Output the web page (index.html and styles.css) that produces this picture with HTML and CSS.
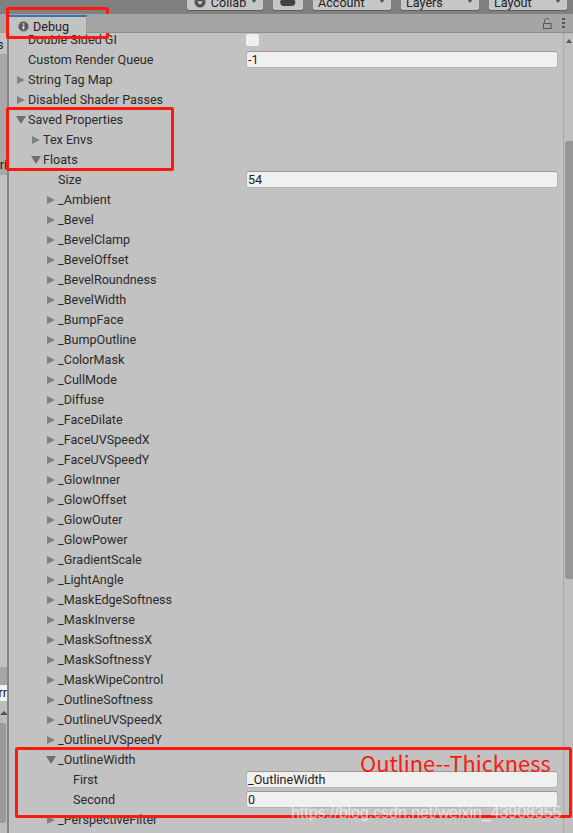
FILE: index.html
```html
<!DOCTYPE html>
<html lang="en">
<head>
<meta charset="utf-8">
<title>Debug Inspector</title>
<link rel="stylesheet" href="styles.css">
</head>
<body>
<header class="toolbar">
  <div class="tb-btn collab"><svg class="cloud-dot" viewBox="0 0 12 12"><circle cx="6" cy="6" r="5.5" fill="#555"/><path d="M3 5.5l3 3 3-3z" fill="#ddd"/></svg><span>Collab</span><i class="caret"></i></div>
  <div class="tb-btn cloud"><svg viewBox="0 0 16 10"><path d="M4 9.5a3.2 3.2 0 0 1-.5-6.3A4.3 4.3 0 0 1 11.500 3a3.300 3.300 0 0 1 .5 6.500z" fill="#444"/></svg></div>
  <div class="tb-btn account"><span>Account</span><i class="caret"></i></div>
  <div class="tb-btn layers"><span>Layers</span><i class="caret"></i></div>
  <div class="tb-btn layout"><span>Layout</span><i class="caret"></i></div>
</header>
<div class="workspace">
  <aside class="side">
    <div class="side-top"><span class="side-s">s</span></div>
    <div class="side-label"><span>ri</span></div>
    <div class="side-fill"></div>
    <div class="side-head"></div>
    <div class="side-field"><span>rr</span></div>
    <div class="side-scroll"><i class="side-up"></i><div class="side-thumb"></div></div>
  </aside>
  <main class="inspector">
    <div class="tabbar">
      <div class="tab">
        <svg class="info" viewBox="0 0 11 11"><circle cx="5.500" cy="5.500" r="5" fill="#5a5a5a"/><rect x="4.600" y="4.600" width="1.800" height="3.900" fill="#ddd"/><rect x="4.600" y="2.300" width="1.800" height="1.500" fill="#ddd"/></svg>
        <span>Debug</span>
      </div>
      <div class="tab-tools">
        <svg class="lock" viewBox="0 0 9 11"><path d="M1.500 4.500V2.500a2.300 2.300 0 0 1 4.500-.6" fill="none" stroke="#555" stroke-width="1"/><rect x=".5" y="5.500" width="7.500" height="5" fill="none" stroke="#555" stroke-width="1"/></svg>
        <div class="dots"><i></i><i></i><i></i></div>
      </div>
    </div>
    <div class="pane">
      <div class="rows">
        <div class="row l0"><span class="lbl">Double Sided GI</span><span class="check"></span></div>
        <div class="row l0"><span class="lbl">Custom Render Queue</span><span class="field">-1</span></div>
        <div class="row l0"><i class="tri r"></i><span class="lbl">String Tag Map</span></div>
        <div class="row l0"><i class="tri r"></i><span class="lbl">Disabled Shader Passes</span></div>
        <div class="row l0"><i class="tri d"></i><span class="lbl">Saved Properties</span></div>
        <div class="row l1"><i class="tri r"></i><span class="lbl">Tex Envs</span></div>
        <div class="row l1"><i class="tri d"></i><span class="lbl">Floats</span></div>
        <div class="row l2"><span class="lbl">Size</span><span class="field">54</span></div>
        <div class="row l2 fold"><i class="tri r"></i><span class="lbl">_Ambient</span></div>
        <div class="row l2 fold"><i class="tri r"></i><span class="lbl">_Bevel</span></div>
        <div class="row l2 fold"><i class="tri r"></i><span class="lbl">_BevelClamp</span></div>
        <div class="row l2 fold"><i class="tri r"></i><span class="lbl">_BevelOffset</span></div>
        <div class="row l2 fold"><i class="tri r"></i><span class="lbl">_BevelRoundness</span></div>
        <div class="row l2 fold"><i class="tri r"></i><span class="lbl">_BevelWidth</span></div>
        <div class="row l2 fold"><i class="tri r"></i><span class="lbl">_BumpFace</span></div>
        <div class="row l2 fold"><i class="tri r"></i><span class="lbl">_BumpOutline</span></div>
        <div class="row l2 fold"><i class="tri r"></i><span class="lbl">_ColorMask</span></div>
        <div class="row l2 fold"><i class="tri r"></i><span class="lbl">_CullMode</span></div>
        <div class="row l2 fold"><i class="tri r"></i><span class="lbl">_Diffuse</span></div>
        <div class="row l2 fold"><i class="tri r"></i><span class="lbl">_FaceDilate</span></div>
        <div class="row l2 fold"><i class="tri r"></i><span class="lbl">_FaceUVSpeedX</span></div>
        <div class="row l2 fold"><i class="tri r"></i><span class="lbl">_FaceUVSpeedY</span></div>
        <div class="row l2 fold"><i class="tri r"></i><span class="lbl">_GlowInner</span></div>
        <div class="row l2 fold"><i class="tri r"></i><span class="lbl">_GlowOffset</span></div>
        <div class="row l2 fold"><i class="tri r"></i><span class="lbl">_GlowOuter</span></div>
        <div class="row l2 fold"><i class="tri r"></i><span class="lbl">_GlowPower</span></div>
        <div class="row l2 fold"><i class="tri r"></i><span class="lbl">_GradientScale</span></div>
        <div class="row l2 fold"><i class="tri r"></i><span class="lbl">_LightAngle</span></div>
        <div class="row l2 fold"><i class="tri r"></i><span class="lbl">_MaskEdgeSoftness</span></div>
        <div class="row l2 fold"><i class="tri r"></i><span class="lbl">_MaskInverse</span></div>
        <div class="row l2 fold"><i class="tri r"></i><span class="lbl">_MaskSoftnessX</span></div>
        <div class="row l2 fold"><i class="tri r"></i><span class="lbl">_MaskSoftnessY</span></div>
        <div class="row l2 fold"><i class="tri r"></i><span class="lbl">_MaskWipeControl</span></div>
        <div class="row l2 fold"><i class="tri r"></i><span class="lbl">_OutlineSoftness</span></div>
        <div class="row l2 fold"><i class="tri r"></i><span class="lbl">_OutlineUVSpeedX</span></div>
        <div class="row l2 fold"><i class="tri r"></i><span class="lbl">_OutlineUVSpeedY</span></div>
        <div class="row l2 fold"><i class="tri d"></i><span class="lbl">_OutlineWidth</span></div>
        <div class="row l3"><span class="lbl">First</span><span class="field">_OutlineWidth</span></div>
        <div class="row l3"><span class="lbl">Second</span><span class="field">0</span></div>
        <div class="row l2 fold"><i class="tri r"></i><span class="lbl">_PerspectiveFilter</span></div>
      </div>
      <div class="vscroll"><i class="up"></i><div class="thumb"></div></div>
    </div>
  </main>
</div>
<div class="mark mark-tab"></div>
<div class="mark mark-saved"></div>
<div class="mark mark-outline"></div>
<div class="note">Outline--Thickness</div>
<div class="watermark">https://blog.csdn.net/weixin_43908355</div>
</body>
</html>
```
FILE: styles.css
```css
* { box-sizing: border-box; }
html, body { margin: 0; padding: 0; }
body {
  width: 573px;
  height: 833px;
  overflow: hidden;
  position: relative;
  background: #c2c2c2;
  color: #1c1c1c;
  font-family: "Roboto", "Inter", "Liberation Sans", sans-serif;
  font-size: 12.6px;
  display: flex;
  flex-direction: column;
}
.toolbar {
  height: 14px;
  flex: none;
  background: #808080;
  position: relative;
  overflow: hidden;
  display: flex;
  justify-content: flex-end;
  align-items: flex-end;
  padding: 0 6px 4px 0;
  gap: 10px;
}
.tb-btn {
  height: 16px;
  background: #c6c6c6;
  border-radius: 2px;
  box-shadow: 0 1px 0 #5e5e5e;
  display: flex;
  align-items: center;
  justify-content: space-between;
  padding: 0 6px 0 5px;
  color: #222;
  font-size: 12.6px;
  flex: none;
}
.collab { width: 76px; gap: 3px; padding-left: 7px; }
.cloud { width: 30px; padding: 0 6px; justify-content: center; }
.cloud svg { width: 18px; height: 12px; margin-top: -3px; }
.account, .layers, .layout { width: 78px; }
.cloud-dot { width: 12px; height: 12px; flex: none; }
.caret {
  width: 0; height: 0;
  border-left: 3px solid transparent;
  border-right: 3px solid transparent;
  border-top: 4px solid #555;
  margin-bottom: 3px;
}
.workspace { flex: 1; min-height: 0; display: flex; }
.side {
  width: 9px;
  flex: none;
  background: #a8a8a8;
  border-right: 2px solid #858585;
  display: flex;
  flex-direction: column;
  overflow: hidden;
}
.side-top {
  height: 41px;
  background: #c2c2c2;
  overflow: hidden;
  border-top: 19px solid #a5a5a5;
  border-bottom: 1px solid #a5a5a5;
}
.side-s { display: block; margin-left: -3px; line-height: 14px; padding-top: 5px; }
.side-label { height: 20px; margin-top: 100px; background: #a9a9a9; overflow: hidden; line-height: 20px; white-space: nowrap; direction: rtl; text-align: right; }
.side-fill { height: 492px; background: #c2c2c2; }
.side-head { height: 18px; background: #a5a5a5; }
.side-field { height: 16px; background: #f2f2f2; line-height: 16px; overflow: hidden; white-space: nowrap; direction: rtl; }
.side-scroll { flex: 1; position: relative; background: #bcbcbc; padding-top: 22px; }
.side-up { position: absolute; left: 0; top: 10px; border-left: 4px solid transparent; border-right: 4px solid transparent; border-bottom: 4px solid #555; }
.side-thumb { height: 100px; width: 6px; background: #9a9a9a; border-radius: 0 3px 3px 0; }
.inspector { flex: 1; min-width: 0; display: flex; flex-direction: column; position: relative; }
.tabbar {
  height: 19px;
  flex: none;
  background: #a5a5a5;
  border-bottom: 1px solid #8e8e8e;
  display: flex;
  justify-content: space-between;
  position: relative;
  z-index: 2;
}
.tab {
  width: 78px;
  height: 20px;
  margin-top: 1px;
  background: #c2c2c2;
  border-top: 2px solid #3a72b0;
  display: flex;
  align-items: center;
  gap: 4px;
  padding: 0 0 0 9px;
  color: #1c1c1c;
  border-right: 1px solid #9a9a9a;
}
.info { width: 11px; height: 11px; flex: none; }
.tab-tools { display: flex; align-items: center; gap: 10px; padding-right: 8px; height: 18px; }
.lock { width: 9px; height: 11px; }
.dots { display: flex; flex-direction: column; gap: 2px; }
.dots i { width: 3px; height: 2px; background: #555; display: block; }
.pane { flex: 1; min-height: 0; display: flex; position: relative; overflow: hidden; }
.rows { flex: 1; min-width: 0; margin-top: -3px; padding-right: 5px; }
.row {
  height: 20px;
  display: flex;
  align-items: center;
  position: relative;
  white-space: nowrap;
}
.l0 { padding-left: 19px; }
.l1 { padding-left: 34px; }
.l2 { padding-left: 49px; }
.l3 { padding-left: 64px; }
.tri { position: absolute; width: 0; height: 0; }
.l0 .tri { left: 8px; }
.l1 .tri { left: 23px; }
.l2 .tri { left: 38px; }
.tri.r { border-top: 4.500px solid transparent; border-bottom: 4.500px solid transparent; border-left: 8px solid #808080; }
.tri.d { border-left: 5px solid transparent; border-right: 5px solid transparent; border-top: 8px solid #707070; margin-left: -1px; }
.lbl { color: #2a2a2a; margin-bottom: 2px; }
.check {
  position: absolute;
  left: 237px;
  top: 4px;
  width: 13px;
  height: 12px;
  background: #efefef;
  border-radius: 2px;
}
.field {
  position: absolute;
  left: 237px;
  right: 0;
  top: 1px;
  height: 17px;
  background: #f0f0f0;
  border: 1px solid #b4b4b4;
  border-top-color: #9a9a9a;
  border-radius: 3px;
  padding-left: 1px;
  line-height: 15px;
  color: #222;
}
.vscroll {
  width: 10px;
  flex: none;
  position: relative;
  background: #bfbfbf;
  border-left: 1px solid #a9a9a9;
}
.up {
  position: absolute;
  left: 2px;
  top: 6px;
  border-left: 3.500px solid transparent;
  border-right: 3.500px solid transparent;
  border-bottom: 4px solid #555;
}
.thumb {
  position: absolute;
  left: 1px;
  right: 0;
  top: 108px;
  height: 438px;
  background: #969696;
  border-radius: 3px 0 0 3px;
}
.mark { position: absolute; border: 3px solid #fb1a0d; border-radius: 2px; pointer-events: none; }
.mark-tab { left: 6px; top: 7px; width: 103px; height: 32px; }
.mark-saved { left: 6px; top: 107px; width: 168px; height: 64px; }
.mark-outline { left: 15px; top: 747px; width: 557px; height: 71px; }
.note {
  position: absolute;
  left: 360px;
  top: 749px;
  font-family: "Noto Sans CJK SC", "Noto Sans", sans-serif;
  font-size: 21.8px;
  line-height: 28px;
  color: #fb1a0d;
}
.watermark {
  position: absolute;
  left: 291px;
  top: 803px;
  font-family: "Liberation Sans", sans-serif;
  font-size: 15.9px;
  line-height: 20px;
  color: rgba(255, 255, 255, 0.62);
  white-space: nowrap;
}
```
